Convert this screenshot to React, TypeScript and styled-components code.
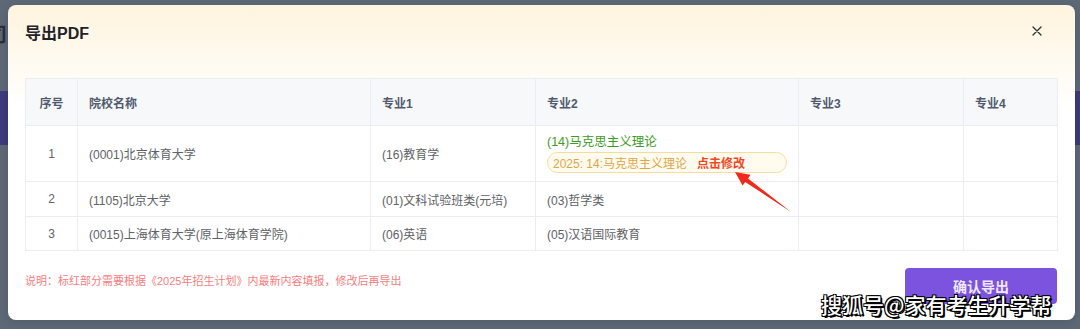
import React from 'react';
import styled, { createGlobalStyle } from 'styled-components';

type Column = {
    text: string;
    width: number;
    center?: boolean;
};

type Row = {
    no: number;
    school: string;
    majors: string[];
    height: number;
};

const columns: Column[] = [
    { text: '序号', width: 52, center: true },
    { text: '院校名称', width: 293 },
    { text: '专业1', width: 165 },
    { text: '专业2', width: 263 },
    { text: '专业3', width: 165 },
    { text: '专业4', width: 94 },
];

const rows: Row[] = [
    { no: 1, school: '(0001)北京体育大学', majors: ['(16)教育学', '(14)马克思主义理论', '', ''], height: 56 },
    { no: 2, school: '(1105)北京大学', majors: ['(01)文科试验班类(元培)', '(03)哲学类', '', ''], height: 35 },
    { no: 3, school: '(0015)上海体育大学(原上海体育学院)', majors: ['(06)英语', '(05)汉语国际教育', '', ''], height: 34 },
];

const GlobalStyle = createGlobalStyle`
    html, body {
        margin: 0;
        padding: 0;
    }
    body {
        font-family: "Liberation Sans", "Noto Sans CJK SC", sans-serif;
    }
`;

export default function App() {
    return (
        <Stage>
            <GlobalStyle />
            <Peek><span>司</span></Peek>
            <Dialog>
                <Header>
                    <Title>导出PDF</Title>
                    <CloseButton aria-label="close">
                        <svg width="10" height="10" viewBox="0 0 10 10">
                            <path d="M1 1 L9 9 M9 1 L1 9" stroke="#303133" strokeWidth="1.3" strokeLinecap="round" />
                        </svg>
                    </CloseButton>
                </Header>
                <TableWrap>
                    <Table>
                        <colgroup>
                            {columns.map((c, i) => <col key={i} style={{ width: c.width }} />)}
                        </colgroup>
                        <thead>
                            <tr>
                                {columns.map((c, i) => (
                                    <HeadCell key={i} $center={c.center}>{c.text}</HeadCell>
                                ))}
                            </tr>
                        </thead>
                        <tbody>
                            {rows.map((row) => (
                                <BodyRow key={row.no} $height={row.height}>
                                    <Cell $center>{row.no}</Cell>
                                    <Cell>{row.school}</Cell>
                                    <Cell>{row.majors[0]}</Cell>
                                    <Cell>
                                        {row.no === 1 ? (
                                            <>
                                                <MatchedMajor>{row.majors[1]}</MatchedMajor>
                                                <Notice>
                                                    <span>2025: 14:马克思主义理论</span>
                                                    <EditLink>点击修改</EditLink>
                                                </Notice>
                                            </>
                                        ) : row.majors[1]}
                                    </Cell>
                                    <Cell>{row.majors[2]}</Cell>
                                    <Cell>{row.majors[3]}</Cell>
                                </BodyRow>
                            ))}
                        </tbody>
                    </Table>
                    <Arrow width="66" height="48" viewBox="0 0 66 48">
                        <path d="M5 4 L20.5 6.8 L18 10.4 L61 44 L15.2 14 L12.6 17.6 Z" fill="#f2281c" />
                    </Arrow>
                </TableWrap>
                <Footer>
                    <Note>说明：标红部分需要根据《2025年招生计划》内最新内容填报，修改后再导出</Note>
                    <ConfirmButton>确认导出</ConfirmButton>
                </Footer>
            </Dialog>
            <Watermark>搜狐号@家有考生升学帮</Watermark>
        </Stage>
    );
}

const Stage = styled.div`
    position: relative;
    display: flex;
    align-items: flex-start;
    width: 1080px;
    height: 329px;
    padding-top: 5px;
    box-sizing: border-box;
    overflow: hidden;
    background:
        linear-gradient(180deg, transparent 91px, #3d3b7b 91px, #3d3b7b 145px, transparent 145px),
        #5e6978;
`;

const Peek = styled.div`
    width: 8px;
    flex-shrink: 0;
    overflow: hidden;
    display: flex;
    justify-content: flex-end;
    padding-top: 18px;
    span {
        font-size: 20px;
        font-weight: 700;
        color: #2a2f38;
        line-height: 24px;
        margin-right: 1px;
    }
`;

const Dialog = styled.div`
    width: 1067px;
    height: 315px;
    flex-shrink: 0;
    border-radius: 8px;
    overflow: hidden;
    display: flex;
    flex-direction: column;
    background: linear-gradient(180deg, #fef4de 0%, #fffaf0 55px, #fffdf9 85px, #ffffff 100px);
    box-shadow: 0 2px 12px rgba(0, 0, 0, 0.15);
`;

const Header = styled.div`
    height: 73px;
    box-sizing: border-box;
    padding: 20px 33px 0 17px;
    display: flex;
    justify-content: space-between;
    align-items: flex-start;
`;

const Title = styled.div`
    font-size: 16px;
    line-height: 18px;
    font-weight: 700;
    color: #1f2329;
`;

const CloseButton = styled.div`
    display: flex;
    margin-top: 1px;
    cursor: pointer;
`;

const TableWrap = styled.div`
    position: relative;
    padding: 0 18px 0 17px;
`;

const Table = styled.table`
    width: 1032px;
    table-layout: fixed;
    border-collapse: collapse;
    border: 1px solid #ebedf3;
    font-size: 12px;
`;

const HeadCell = styled.th<{ $center?: boolean }>`
    height: 46px;
    padding: 0 11px;
    background: #f7f8fa;
    border: 1px solid #ebedf3;
    color: #515a6e;
    font-weight: 700;
    text-align: ${({ $center }) => ($center ? 'center' : 'left')};
`;

const BodyRow = styled.tr<{ $height: number }>`
    height: ${({ $height }) => $height}px;
    background: #ffffff;
`;

const Cell = styled.td<{ $center?: boolean }>`
    padding: 0 11px;
    border: 1px solid #ebedf3;
    color: #606266;
    text-align: ${({ $center }) => ($center ? 'center' : 'left')};
    white-space: nowrap;
`;

const MatchedMajor = styled.div`
    color: #3e9a26;
    font-size: 12.5px;
    line-height: 17px;
    margin-top: 1px;
`;

const Notice = styled.div`
    display: flex;
    align-items: center;
    gap: 10px;
    height: 21px;
    box-sizing: border-box;
    margin: 1px 0;
    padding: 0 5px;
    border: 1px solid #f2dd9f;
    border-radius: 11px;
    background: #fffcef;
    color: #e2a447;
`;

const EditLink = styled.span`
    color: #f2461f;
    font-weight: 700;
    cursor: pointer;
`;

const Arrow = styled.svg`
    position: absolute;
    left: 722px;
    top: 90px;
    pointer-events: none;
`;

const Footer = styled.div`
    display: flex;
    justify-content: space-between;
    align-items: flex-start;
    padding: 17px 18px 0 17px;
`;

const Note = styled.div`
    padding-top: 5px;
    font-size: 11px;
    line-height: 16px;
    color: #f57d7d;
`;

const ConfirmButton = styled.button`
    width: 152px;
    height: 36px;
    border: none;
    border-radius: 4px;
    background: #7b53de;
    color: #efe8ff;
    font-family: inherit;
    font-size: 14px;
    font-weight: 700;
    cursor: pointer;
`;

const Watermark = styled.div`
    position: absolute;
    left: 821px;
    top: 290px;
    font-size: 21px;
    line-height: 28px;
    font-weight: 500;
    color: #ffffff;
    font-family: "Noto Sans CJK SC", sans-serif;
    text-shadow:
        1px 1px 0 #000, -1px -1px 0 #000, 1px -1px 0 #000, -1px 1px 0 #000,
        2px 2px 0 #000, 0 1px 0 #000, 1px 0 0 #000;
    pointer-events: none;
`;
